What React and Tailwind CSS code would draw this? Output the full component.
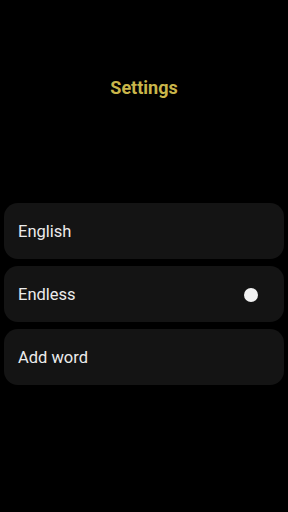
export default function App() {
  const font = { fontFamily: "Roboto, 'Noto Sans', sans-serif" };
  return (
    <div className="w-[288px] h-[512px] bg-black flex flex-col" style={font}>
      <div className="h-[176px] flex items-start justify-center pt-[76px]">
        <h1 className="text-[18px] leading-[24px] font-bold text-[#c9b54a]">Settings</h1>
      </div>
      <div className="mt-[27px] px-[4px] flex flex-col gap-[7px]">
        <div className="h-[56px] rounded-[14px] bg-[#141414] flex items-center px-[14px] pt-[2px]">
          <span className="text-[16.5px] text-[#ececec]">English</span>
        </div>
        <div className="h-[56px] rounded-[14px] bg-[#141414] flex items-center justify-between pl-[14px] pr-[26px] pt-[2px]">
          <span className="text-[16.5px] text-[#ececec]">Endless</span>
          <span className="w-[14px] h-[14px] rounded-full bg-[#f2f2f2]" />
        </div>
        <div className="h-[56px] rounded-[14px] bg-[#141414] flex items-center px-[14px] pt-[2px]">
          <span className="text-[16.5px] text-[#ececec]">Add word</span>
        </div>
      </div>
    </div>
  );
}
